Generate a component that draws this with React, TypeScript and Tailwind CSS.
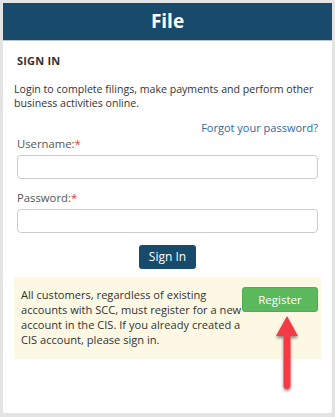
import React from "react";

export default function App() {
  return (
    <div
      className="w-[335px] h-[417px] bg-[#e4e4e4] pt-[3px] pl-[3px] pr-[3px] pb-[4px]"
      style={{ fontFamily: '"Open Sans", "Noto Sans", sans-serif' }}
    >
      <div className="relative h-full bg-white rounded-[2px] flex flex-col">
        <div className="h-[38px] bg-[#174a6b] border-b border-[#b4c6d3] flex items-center justify-center">
          <span className="text-white font-bold text-[19px] leading-none">File</span>
        </div>
        <div className="px-[11px] pt-[12px] flex flex-col">
          <div className="pl-[3px] text-[11px] leading-[15px] font-bold text-[#333] tracking-[0.2px]">SIGN IN</div>
          <p className="mt-[14px] text-[10.6px] leading-[14px] text-[#333]">
            Login to complete filings, make payments and perform other business activities online.
          </p>
          <div className="px-[3px] flex flex-col">
            <div className="mt-[10px] text-right text-[11px] leading-[16px] text-[#2f6a9a]">Forgot your password?</div>
            <div className="mt-[0px] text-[11.3px] leading-[16px] text-[#555]">
              Username:<span className="text-[#e53935]">*</span>
            </div>
            <div className="mt-[3px] h-[24px] border border-[#cccccc] rounded-[4px] bg-white" />
            <div className="mt-[11px] text-[11.3px] leading-[16px] text-[#555]">
              Password:<span className="text-[#e53935]">*</span>
            </div>
            <div className="mt-[3px] h-[24px] border border-[#cccccc] rounded-[4px] bg-white" />
            <div className="mt-[12px] flex justify-center">
              <div className="w-[57px] h-[24px] bg-[#174a6b] rounded-[3px] flex items-center justify-center text-white text-[12px]">
                Sign In
              </div>
            </div>
          </div>
          <div className="mt-[8px] h-[82px] bg-[#fcf8e3] flex pl-[7px] pr-[3px] pt-[10px]">
            <p className="w-[221px] text-[11.1px] leading-[15px] text-[#333]">
              All customers, regardless of existing accounts with SCC, must register for a new account in the CIS. If you already created a CIS account, please sign in.
            </p>
            <div className="ml-auto w-[76px] h-[25px] bg-[#5cb85c] rounded-[3px] border border-[#4cae4c] flex items-center justify-center text-white text-[11.5px]">
              Register
            </div>
          </div>
        </div>
        <svg
          className="absolute left-[268px] top-[309px]"
          width="32"
          height="82"
          viewBox="0 0 32 82"
        >
          <defs>
            <filter id="sh" x="-50%" y="-20%" width="200%" height="150%">
              <feDropShadow dx="0" dy="2" stdDeviation="1.5" floodColor="#000" floodOpacity="0.45" />
            </filter>
          </defs>
          <path
            d="M16 4 L27 24 L19.5 24 L19.5 74 Q19.5 77 16 77 Q12.5 77 12.5 74 L12.5 24 L5 24 Z"
            fill="#f23b44"
            filter="url(#sh)"
          />
        </svg>
      </div>
    </div>
  );
}
